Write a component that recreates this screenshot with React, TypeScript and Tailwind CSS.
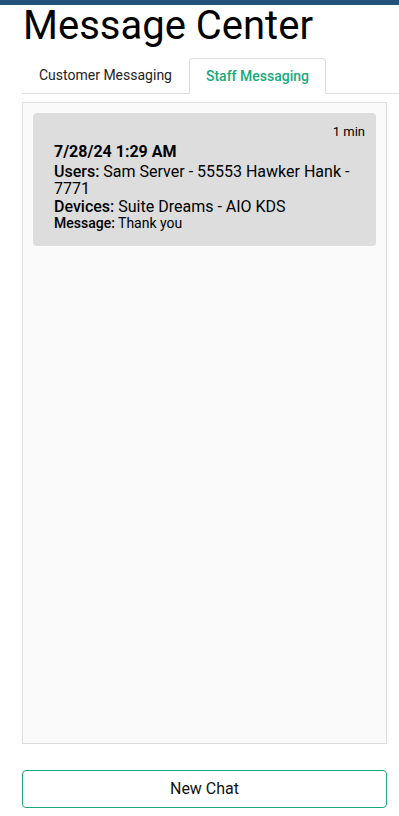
export default function App() {
  return (
    <div className="min-h-[816px] bg-white font-['Roboto',sans-serif] text-black">
      <div className="h-[5px] bg-[#22527a]" />
      <div className="pl-[22px] pr-[12px]">
        <h1 className="pl-[1px] text-[40px] leading-[42px]">Message Center</h1>
        <div className="mt-[11px] mr-[-12px] flex border-b border-[#dddddd]">
          <button className="h-[35px] px-[17px] text-[14px] text-[#222]">Customer Messaging</button>
          <button className="mb-[-1px] h-[36px] rounded-t-[4px] border border-[#dddddd] border-b-white bg-white px-[16px] text-[14px] font-medium text-[#19a97c]">
            Staff Messaging
          </button>
        </div>
        <div className="mt-[8px] h-[642px] border border-[#dddddd] bg-[#fafafa] p-[10px]">
          <div className="rounded-[4px] bg-[#dddddd] px-[21px] pt-[10px] pb-[16px]">
            <div className="mr-[-10px] text-right text-[13px] leading-[18px]">1 min</div>
            <div className="text-[16px] font-bold leading-[22px]">7/28/24 1:29 AM</div>
            <div className="text-[16px] leading-[17px]">
              <span className="font-medium">Users:</span> Sam Server - 55553 Hawker Hank - 7771
            </div>
            <div className="text-[16px] leading-[19px]">
              <span className="font-medium">Devices:</span> Suite Dreams - AIO KDS
            </div>
            <div className="text-[14px] leading-[14px]">
              <span className="font-medium">Message:</span> Thank you
            </div>
          </div>
        </div>
        <button className="mt-[26px] h-[38px] w-full rounded-[4px] border border-[#19a97c] bg-white text-[16px] text-[#111]">
          New Chat
        </button>
      </div>
    </div>
  );
}
